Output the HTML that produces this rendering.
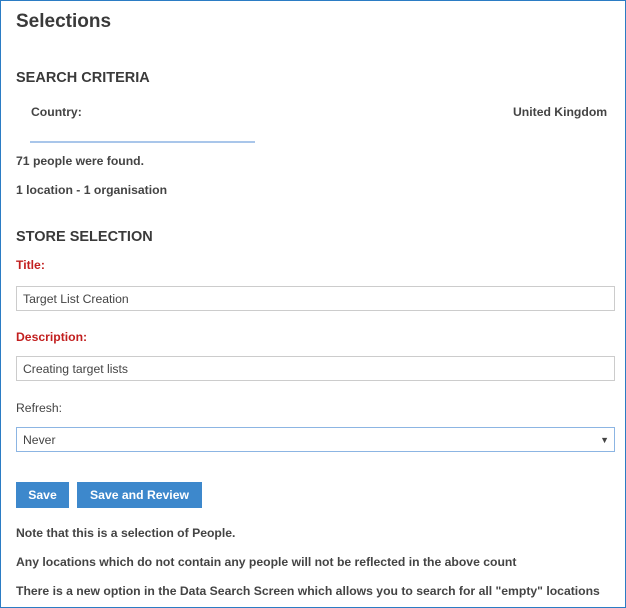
<!DOCTYPE html>
<html><head><style>
html,body{margin:0;padding:0}
body{width:626px;height:608px;overflow:hidden;background:#fff;font-family:"Liberation Sans",sans-serif;color:#333;position:relative}
.frame{position:absolute;left:0;top:0;width:624px;height:606px;border:1px solid #2b7cc4}
.a{position:absolute;white-space:nowrap}
h1{position:absolute;left:16px;top:11px;margin:0;font-size:19px;font-weight:bold;color:#3a3a3a}
.h2{font-size:14.5px;font-weight:bold;color:#3a3a3a}
.t{font-size:12.2px;font-weight:bold;color:#444}
.red{color:#c21f1f}
.inp{position:absolute;left:16px;height:25px;border:1px solid #ccc;box-sizing:border-box;font-size:12.2px;color:#444;padding:5px 6px;width:599px}
.btn{position:absolute;top:482px;height:26px;background:#3d88cc;color:#fff;font-weight:bold;font-size:12.2px;line-height:26px;text-align:center}
</style></head><body>
<div class="frame"></div>
<h1>Selections</h1>
<div class="a h2" style="left:16px;top:70px">SEARCH CRITERIA</div>
<div class="a t" style="left:31px;top:105px">Country:</div>
<div class="a t" style="left:513px;top:105px">United Kingdom</div>
<div class="a" style="left:30px;top:141px;width:225px;height:2px;background:#a9c6ea"></div>
<div class="a t" style="left:16px;top:154px">71 people were found.</div>
<div class="a t" style="left:16px;top:183px">1 location - 1 organisation</div>
<div class="a h2" style="left:16px;top:229px">STORE SELECTION</div>
<div class="a t red" style="left:16px;top:258px">Title:</div>
<div class="inp" style="top:286px">Target List Creation</div>
<div class="a t red" style="left:16px;top:330px">Description:</div>
<div class="inp" style="top:356px">Creating target lists</div>
<div class="a t" style="left:16px;top:401px;font-weight:normal">Refresh:</div>
<div class="inp" style="top:427px;border-color:#8cb5e3">Never<span style="position:absolute;right:5px;top:7px;font-size:9px">▼</span></div>
<div class="btn" style="left:16px;width:53px">Save</div>
<div class="btn" style="left:77px;width:125px">Save and Review</div>
<div class="a t" style="left:16px;top:526px">Note that this is a selection of People.</div>
<div class="a t" style="left:16px;top:555px">Any locations which do not contain any people will not be reflected in the above count</div>
<div class="a t" style="left:16px;top:584px">There is a new option in the Data Search Screen which allows you to search for all "empty" locations</div>
</body></html>
